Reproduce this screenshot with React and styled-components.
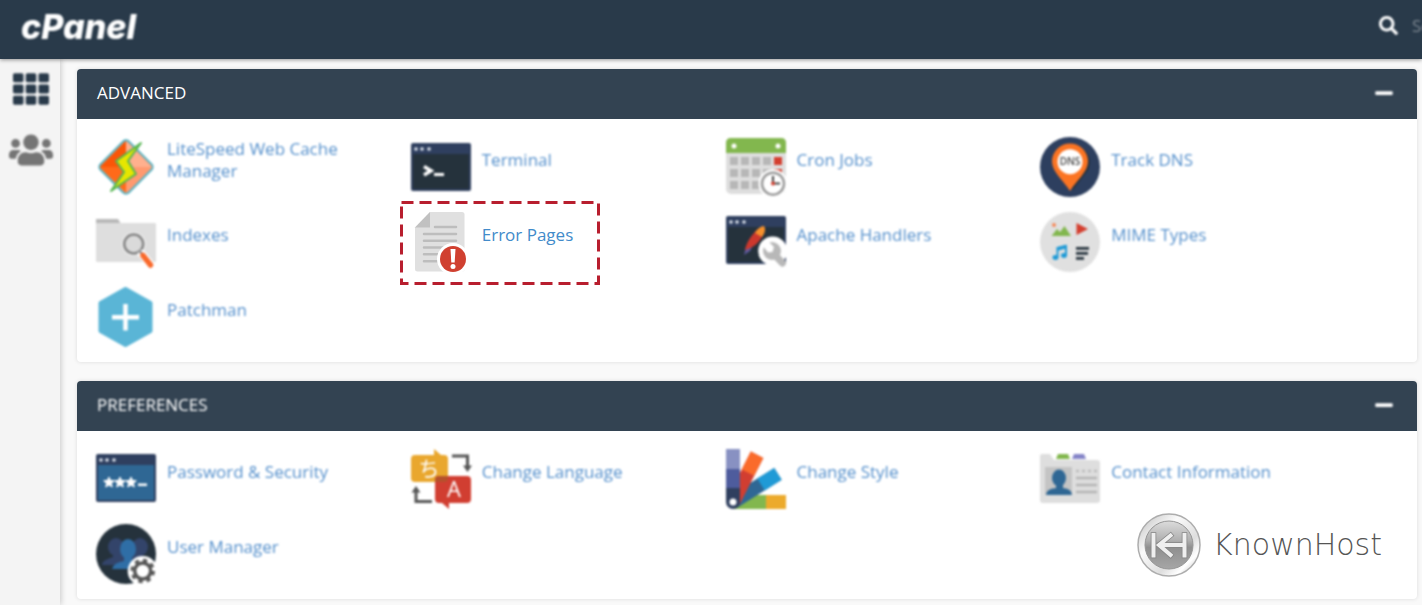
import React from 'react'
import styled, { createGlobalStyle, css } from 'styled-components'
import { FaTh, FaUsers, FaSearch, FaMinus } from 'react-icons/fa'

const LiteSpeedIcon = () => (
    <svg viewBox="0 0 60 60">
        <rect x="10" y="10" width="40" height="40" rx="4" transform="rotate(45 30 30)" fill="#ff9a70" />
        <path d="M30 3.500 L30 56 L4 31 Q3 30 4 29 Z" fill="#ff6a1a" />
        <path d="M30 3.500 L30 30 L4 30 Z" fill="#fa5608" />
        <path d="M30 4 L56 30 L30 30 Z" fill="#ffb08e" />
        <rect x="10" y="10" width="40" height="40" rx="4" transform="rotate(45 30 30)" fill="none" stroke="#5ab4c4" strokeWidth="2" />
        <path d="M45 6 L20 24 L28 35 L15 54 L40 37 L32 24 Z" fill="#e6e600" stroke="#55b552" strokeWidth="2" strokeLinejoin="round" />
    </svg>
)

const WindowFrame = ({ top, fill, children }) => (
    <svg viewBox="0 0 60 60">
        <rect x="0" y={top} width="60" height="48" rx="2" fill="#2f3f5f" />
        <rect x="2" y={top + 11} width="56" height="35" fill={fill} />
        <circle cx="5" cy={top + 6} r="1.800" fill="#dfe5ee" />
        <circle cx="11" cy={top + 6} r="1.800" fill="#dfe5ee" />
        <circle cx="18" cy={top + 6} r="1.800" fill="#dfe5ee" />
        {children}
    </svg>
)

const TerminalIcon = () => (
    <WindowFrame top={6} fill="#25323c">
        <path d="M13 29.500 L20 33.700 L13 38" fill="none" stroke="#fff" strokeWidth="3.500" />
        <rect x="23" y="36" width="10" height="3" fill="#fff" />
    </WindowFrame>
)

const CronIcon = () => (
    <svg viewBox="0 0 60 60">
        <rect x="0" y="1" width="60" height="56" rx="5" fill="#dedede" />
        <path d="M0 16 V6 Q0 1 5 1 H55 Q60 1 60 6 V16 Z" fill="#82b74e" />
        <circle cx="8" cy="9" r="2.500" fill="#fff" />
        <circle cx="52" cy="9" r="2.500" fill="#fff" />
        {[20, 32, 44].map((y) =>
            [4, 15, 26, 37, 48].map((x) => (
                <rect key={`${x}-${y}`} x={x} y={y} width="8" height="8" fill={x === 48 && y < 44 ? '#d43f2f' : '#b7b7b7'} />
            ))
        )}
        <circle cx="47" cy="46.700" r="14.500" fill="#fff" />
        <circle cx="47" cy="46.700" r="11" fill="#fff" stroke="#9b9b9b" strokeWidth="2.500" />
        <path d="M47 39 V46.500 H54" fill="none" stroke="#444" strokeWidth="2" />
        <circle cx="47" cy="46.500" r="2" fill="#d43f2f" />
    </svg>
)

const DnsIcon = () => (
    <svg viewBox="0 0 60 60">
        <circle cx="30" cy="30" r="30" fill="#2d3f5f" />
        <path d="M43 12 Q53 20 48 33 L32 54 Z" fill="#23303c" />
        <path d="M30 54 C24 44 12 35 12 24.500 A18 18 0 0 1 48 24.500 C48 35 36 44 30 54 Z" fill="#fb7423" />
        <circle cx="30" cy="24.700" r="12.500" fill="#fff" />
        <text x="30" y="28" textAnchor="middle" fontFamily="Open Sans, sans-serif" fontSize="10" fontWeight="600" fill="#444">DNS</text>
    </svg>
)

const IndexesIcon = () => (
    <svg viewBox="0 0 60 60">
        <path d="M0 12 V7 H22 L25 12 Z" fill="#b8b8b8" />
        <rect x="0" y="11" width="60" height="39" rx="1" fill="#dedede" />
        <circle cx="37.700" cy="32" r="12" fill="#eee" />
        <circle cx="37.700" cy="32" r="9.500" fill="#dadada" stroke="#858585" strokeWidth="2.500" />
        <path d="M46 42 L54 52" stroke="#fff" strokeWidth="8" strokeLinecap="round" />
        <path d="M43.500 39 L47 43" stroke="#858585" strokeWidth="2.500" />
        <path d="M47 43.500 L54.500 53" stroke="#f9692b" strokeWidth="5.500" strokeLinecap="round" />
    </svg>
)

const ErrorPageIcon = () => (
    <svg viewBox="0 0 60 60">
        <path d="M19 0 H51 Q53.500 0 53.500 2.500 V57 Q53.500 59.500 51 59.500 H6.500 Q4 59.500 4 57 V15.500 Z" fill="#e0e0e0" />
        <path d="M19 0 V15.500 H4 Z" fill="#c1c1c1" />
        <path d="M24 15 H45 M13 22 H45 M13 28.700 H45 M13 35.500 H45 M13 42.300 H45 M13 49.200 H45" stroke="#bdbdbd" strokeWidth="2.500" strokeLinecap="round" />
        <circle cx="42" cy="47" r="16" fill="#fff" />
        <circle cx="42" cy="47" r="13" fill="#d04030" />
        <path d="M39.500 37 H44.500 L43.700 50.500 H40.300 Z" fill="#fff" />
        <circle cx="42" cy="54.500" r="2.500" fill="#fff" />
    </svg>
)

const ApacheIcon = () => (
    <WindowFrame top={4} fill="#25323c">
        <path d="M18 43 L20 35 L27 33 L24 39 Z" fill="#5f5a9c" />
        <path d="M19 38 C20 31 26 22 32 17 L37 23 C34 30 27 36 19 38 Z" fill="#cd382d" />
        <path d="M29 21 C31 17 35 14 38 14 C40 17 39 21 36 25 Z" fill="#f6902c" />
        <circle cx="46.700" cy="39" r="14.500" fill="#fff" />
        <path d="M47 41 L56.500 51" stroke="#b8b8b8" strokeWidth="7" strokeLinecap="round" />
        <circle cx="46" cy="39" r="9" fill="#b8b8b8" />
        <path d="M36 33 L41 28 L48 35 L46.500 40 L42 40.500 Z" fill="#fff" />
    </WindowFrame>
)

const MimeIcon = () => (
    <svg viewBox="0 0 60 60">
        <circle cx="30" cy="30" r="30" fill="#e0e0e0" />
        <circle cx="14" cy="13" r="2" fill="#f68a5a" />
        <path d="M11.500 24 L17 17 L20 20 L24.500 14 L31 24 Z" fill="#82b74e" />
        <path d="M36.500 11 L48 17 L36.500 23 Z" fill="#d43f2f" />
        <path d="M17.500 45 V36 L26 34 V43" fill="none" stroke="#1f9ad6" strokeWidth="2" />
        <path d="M17 37 L26.500 34.500" stroke="#1f9ad6" strokeWidth="3.500" />
        <ellipse cx="15.500" cy="45.500" rx="3" ry="2.400" fill="#1f9ad6" />
        <ellipse cx="24" cy="43.500" rx="3" ry="2.400" fill="#1f9ad6" />
        <path d="M36 36.300 H49 M36 41.300 H48 M36 46.300 H44" stroke="#25323c" strokeWidth="2.800" />
    </svg>
)

const PatchmanIcon = () => (
    <svg viewBox="0 0 60 60">
        <path d="M29.500 2 L54.500 16 V44 L29.500 58 L4.500 44 V16 Z" fill="#5ab5d6" stroke="#5ab5d6" strokeWidth="4" strokeLinejoin="round" />
        <path d="M16 30.300 H43 M29.500 17 V43.500" stroke="#fff" strokeWidth="4.500" />
    </svg>
)

const star = (cx) => `M${cx} 28 l1.500 3.500 3.800 .3 -2.900 2.500 .9 3.700 -3.300 -2 -3.300 2 .9 -3.700 -2.900 -2.500 3.800 -.3 Z`

const PasswordIcon = () => (
    <WindowFrame top={5} fill="#2f6794">
        <path d={`${star(13)} ${star(24)} ${star(35)}`} fill="#fff" stroke="#fff" strokeWidth="1" />
        <rect x="42" y="34.500" width="9" height="2.500" fill="#fff" />
    </WindowFrame>
)

const LanguageIcon = () => (
    <svg viewBox="0 0 60 60">
        <path d="M4 6 H23 V0 L30 6 H33 Q37 6 37 10 V29 Q37 33 33 33 H4 Q0 33 0 29 V10 Q0 6 4 6 Z" fill="#e9a72e" />
        <path d="M28 27 H56 Q60 27 60 31 V50 Q60 54 56 54 H38 V60 L31 54 H28 Q24 54 24 50 V31 Q24 27 28 27 Z" fill="#d13e31" />
        <path d="M24 33 V31 Q24 27 28 27 H37 V29 Q37 33 33 33 Z" fill="#b5512c" />
        <text x="18" y="27" textAnchor="middle" fontFamily="Noto Sans CJK JP, sans-serif" fontSize="21" fill="#fff">ち</text>
        <text x="43" y="48" textAnchor="middle" fontFamily="Open Sans, sans-serif" fontSize="22" fill="#fff">A</text>
        <path d="M41 7 H56.500 V18" fill="none" stroke="#555" strokeWidth="3" />
        <path d="M52 16.500 H61 L56.500 23 Z" fill="#555" />
        <path d="M21 52.500 H5 V42" fill="none" stroke="#555" strokeWidth="3" />
        <path d="M0.500 43.500 H9.500 L5 37 Z" fill="#555" />
    </svg>
)

const Swatch = ({ angle, far, near }) => (
    <g transform={`rotate(${angle} 7 53)`}>
        <rect x="0" y="0" width="14" height="53" fill={near} />
        <rect x="0" y="0" width="14" height="20" fill={far} />
    </g>
)

const StyleIcon = () => (
    <svg viewBox="0 0 60 60">
        <Swatch angle={90} far="#ecaa2c" near="#82b74e" />
        <Swatch angle={58} far="#1f9ad6" near="#2f6794" />
        <Swatch angle={27} far="#fa6b2b" near="#d13e31" />
        <path d="M0 39 H14 V53 A7 7 0 0 1 0 53 Z" fill="#2f3f5f" />
        <rect x="0" y="0" width="14" height="20" fill="#8891c2" />
        <rect x="0" y="20" width="14" height="19" fill="#4e5c9d" />
        <circle cx="7" cy="53" r="3.500" fill="#fff" />
    </svg>
)

const ContactIcon = () => (
    <svg viewBox="0 0 60 60">
        <path d="M2 5 H10 L14 11 H57 Q60 11 60 14 V51 Q60 54 57 54 H3 Q0 54 0 51 V7 Q0 5 2 5 Z" fill="#dedede" />
        <path d="M16 10 L18 5 H28 L30 10 Z" fill="#82b74e" />
        <path d="M32 10 L34 5 H44 L46 10 Z" fill="#8585c8" />
        <rect x="5" y="18" width="27" height="28" fill="#c4c4c4" />
        <ellipse cx="19" cy="29" rx="7" ry="8.500" fill="#2f6794" />
        <path d="M6 46 Q6 40 16 39 V34 H23 V39 Q32 40 32 46 Z" fill="#2f6794" />
        <path d="M36 22 H57" stroke="#bbb" strokeWidth="2.500" strokeDasharray="3 3" />
        <path d="M36 29 H57 M36 36 H57 M36 43 H57" stroke="#b5b5b5" strokeWidth="2.500" />
    </svg>
)

const UserManagerIcon = () => (
    <svg viewBox="0 0 60 60">
        <circle cx="30" cy="30" r="30" fill="#25323c" />
        <ellipse cx="20" cy="23" rx="8" ry="9" fill="#33446a" />
        <ellipse cx="44" cy="23" rx="8" ry="9" fill="#33446a" />
        <path d="M6 41 Q6 36 17 33 V28 H47 V33 L54 41 Z" fill="#33446a" />
        <ellipse cx="32" cy="25" rx="8" ry="10" fill="#2f6ea6" />
        <path d="M16 45 Q17 39 28 37 V30 H36 V37 Q46 39 47 45 Z" fill="#2f6ea6" />
        <circle cx="46.700" cy="47" r="15" fill="#fff" />
        <circle cx="46.700" cy="47" r="8" fill="none" stroke="#555" strokeWidth="3.500" />
        <circle cx="46.700" cy="47" r="10.800" fill="none" stroke="#555" strokeWidth="3" strokeDasharray="4.240 4.240" />
    </svg>
)

const KnownHostEmblem = () => (
    <svg width="64" height="64" viewBox="0 0 64 64">
        <defs>
            <linearGradient id="rim" x1="0" y1="0" x2="1" y2="1">
                <stop offset="0" stopColor="#bdbdbd" />
                <stop offset="0.350" stopColor="#fafafa" />
                <stop offset="0.650" stopColor="#dedede" />
                <stop offset="0.800" stopColor="#ffffff" />
                <stop offset="1" stopColor="#a5a5a5" />
            </linearGradient>
            <linearGradient id="disc" x1="0" y1="0" x2="0" y2="1">
                <stop offset="0" stopColor="#dcdcdc" />
                <stop offset="0.400" stopColor="#b0b0b0" />
                <stop offset="0.550" stopColor="#8f8f8f" />
                <stop offset="1" stopColor="#a6a6a6" />
            </linearGradient>
        </defs>
        <circle cx="32" cy="32" r="31" fill="url(#rim)" stroke="#adadad" strokeWidth="1.500" />
        <circle cx="32" cy="32" r="24" fill="url(#disc)" stroke="#969696" strokeWidth="1" />
        <g fill="none" strokeLinecap="square">
            <path d="M16.500 22 V42.500 M47.500 22 V42.500 M23 32 H46 M33.500 22.500 L22 32 L33.500 42" stroke="#858585" strokeWidth="5.500" />
            <path d="M16.500 22 V42.500 M47.500 22 V42.500 M23 32 H46 M33.500 22.500 L22 32 L33.500 42" stroke="#efefef" strokeWidth="4" />
        </g>
    </svg>
)

const advanced = [
    { label: 'LiteSpeed Web Cache Manager', icon: <LiteSpeedIcon /> },
    { label: 'Terminal', icon: <TerminalIcon /> },
    { label: 'Cron Jobs', icon: <CronIcon /> },
    { label: 'Track DNS', icon: <DnsIcon /> },
    { label: 'Indexes', icon: <IndexesIcon /> },
    { label: 'Error Pages', icon: <ErrorPageIcon />, focused: true },
    { label: 'Apache Handlers', icon: <ApacheIcon /> },
    { label: 'MIME Types', icon: <MimeIcon /> },
    { label: 'Patchman', icon: <PatchmanIcon /> },
]

const preferences = [
    { label: 'Password & Security', icon: <PasswordIcon /> },
    { label: 'Change Language', icon: <LanguageIcon /> },
    { label: 'Change Style', icon: <StyleIcon /> },
    { label: 'Contact Information', icon: <ContactIcon /> },
    { label: 'User Manager', icon: <UserManagerIcon /> },
]

function FeatureGroup({ title, items, focused }) {
    return (
        <Panel>
            <PanelHeader>
                <PanelTitle $focused={focused}>{title}</PanelTitle>
                <CollapseButton aria-label={`Collapse ${title}`}>
                    <FaMinus />
                </CollapseButton>
            </PanelHeader>
            <PanelBody>
                {items.map((item) => (
                    <Feature key={item.label} href="#" $focused={item.focused}>
                        <FeatureIcon>{item.icon}</FeatureIcon>
                        <FeatureLabel>{item.label}</FeatureLabel>
                        {item.focused && (
                            <Outline>
                                <rect x="1.500" y="1.500" width="197" height="81" />
                            </Outline>
                        )}
                    </Feature>
                ))}
            </PanelBody>
        </Panel>
    )
}

function App() {
    return (
        <>
            <GlobalStyle />
            <Page>
                <Header>
                    <Logo href="#">cPanel</Logo>
                    <Search>
                        <FaSearch />
                        <SearchInput type="text" aria-label="Search" placeholder="Search Tools" />
                    </Search>
                </Header>
                <Layout>
                    <Sidebar>
                        <SideLink href="#" aria-label="Home" $color="#293a4a">
                            <FaTh />
                        </SideLink>
                        <SideLink href="#" aria-label="User Manager" $color="#757575" $wide>
                            <FaUsers />
                        </SideLink>
                    </Sidebar>
                    <Main>
                        <FeatureGroup title="ADVANCED" items={advanced} focused />
                        <FeatureGroup title="PREFERENCES" items={preferences} />
                        <Brand>
                            <KnownHostEmblem />
                            <span>KnownHost</span>
                        </Brand>
                    </Main>
                </Layout>
            </Page>
        </>
    )
}

export default App


const GlobalStyle = createGlobalStyle`
    * {
        box-sizing: border-box;
    }

    body {
        margin: 0;
        background: #f9f9f9;
        font-family: "Open Sans", sans-serif;
    }
`

const soft = css`
    filter: blur(1px);
`

const Page = styled.div`
    min-height: 100vh;
    display: flex;
    flex-direction: column;
`

const Header = styled.header`
    height: 59px;
    padding-left: 21px;
    display: flex;
    align-items: center;
    justify-content: space-between;
    background: #293a4a;
    box-shadow: 0 1px 4px rgba(0, 0, 0, 0.4);
    overflow: hidden;
    position: relative;
    z-index: 2;
`

const Logo = styled.a`
    ${soft}
    font-family: Inter, sans-serif;
    font-size: 34px;
    font-weight: 800;
    font-style: italic;
    line-height: 40px;
    padding-bottom: 6px;
    color: #fff;
    text-decoration: none;
`

const Search = styled.div`
    ${soft}
    width: 43px;
    padding-bottom: 8px;
    display: flex;
    align-items: center;
    gap: 14px;
    color: #fff;

    svg {
        flex: none;
        width: 19px;
        height: 19px;
    }
`

const SearchInput = styled.input`
    flex: none;
    width: 160px;
    padding: 0;
    border: none;
    background: transparent;
    font-family: inherit;
    font-size: 17px;
    color: #fff;

    &::placeholder {
        color: #7d8791;
    }
`

const Layout = styled.div`
    flex: 1;
    display: flex;
`

const Sidebar = styled.nav`
    width: 60px;
    flex: none;
    padding: 12px 0 0 2px;
    display: flex;
    flex-direction: column;
    align-items: center;
    gap: 25px;
    background: #f4f4f4;
    box-shadow: 1px 0 6px rgba(0, 0, 0, 0.2);
`

const SideLink = styled.a`
    ${soft}
    display: flex;
    color: ${(props) => props.$color};

    svg {
        width: ${(props) => (props.$wide ? '44px' : '36px')};
        height: 36px;
    }
`

const Main = styled.main`
    flex: 1;
    min-width: 0;
    padding: 10px 5px 5px 17px;
    display: flex;
    flex-direction: column;
    gap: 19px;
    position: relative;
`

const Panel = styled.section`
    border-radius: 4px;
    background: #fff;
    box-shadow: 0 0 4px rgba(0, 0, 0, 0.12);
`

const PanelHeader = styled.div`
    height: 50px;
    padding: 0 24px 2px 20px;
    display: flex;
    align-items: center;
    justify-content: space-between;
    border-radius: 4px 4px 0 0;
    background: #334352;
`

const PanelTitle = styled.h2`
    ${(props) => !props.$focused && soft}
    margin: 0;
    font-size: 17px;
    font-weight: 400;
    line-height: 24px;
    color: #fff;
`

const CollapseButton = styled.button`
    ${soft}
    padding: 0;
    display: flex;
    border: none;
    background: none;
    color: #fff;
    cursor: pointer;

    svg {
        width: 18px;
        height: 20px;
    }
`

const PanelBody = styled.div`
    padding: 18px 62px 15px 19px;
    display: grid;
    grid-template-columns: repeat(4, 1fr);
    row-gap: 15px;
`

const Feature = styled.a`
    height: 60px;
    padding-right: 24px;
    display: flex;
    align-items: center;
    gap: 11px;
    position: relative;
    color: ${(props) => (props.$focused ? '#428bca' : '#5590cc')};
    text-decoration: none;

    > span {
        ${(props) => !props.$focused && soft}
    }
`

const FeatureIcon = styled.span`
    flex: none;
    width: 60px;
    height: 60px;

    svg {
        display: block;
        overflow: visible;
    }
`

const FeatureLabel = styled.span`
    max-width: 200px;
    padding-bottom: 14px;
    font-size: 17px;
    line-height: 22px;
`

// dashed frame around the highlighted feature
const Outline = styled.svg`
    position: absolute;
    top: -11px;
    left: -11px;
    width: 200px;
    height: 84px;

    rect {
        fill: none;
        stroke: #b81e2e;
        stroke-width: 3px;
        stroke-dasharray: 12 6;
    }
`

const Brand = styled.div`
    position: absolute;
    right: 40px;
    bottom: 28px;
    display: flex;
    align-items: center;
    gap: 12px;
    font-family: "DejaVu Sans", sans-serif;
    font-size: 30px;
    font-weight: 200;
    line-height: 32px;
    color: #555;
`
